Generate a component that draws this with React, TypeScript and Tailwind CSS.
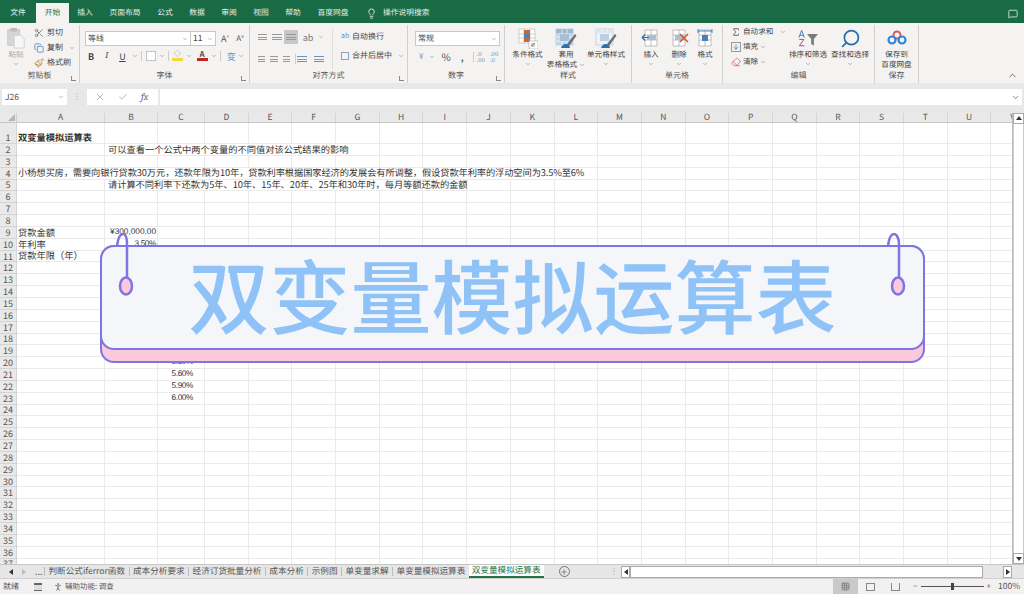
import { ChevronDown, ChevronUp, Check, X, Lightbulb, MessageSquare, Scissors, Copy, Paintbrush, Sigma, ArrowDown, Eraser, Search, Plus, Grid3x3, PersonStanding } from "lucide-react";
import type { ReactNode } from "react";

const tabs = [
  { name: "文件", width: "w-[36px]" },
  { name: "开始", width: "w-[33px]" },
  { name: "插入", width: "w-[32px]" },
  { name: "页面布局", width: "w-[48px]" },
  { name: "公式", width: "w-[32px]" },
  { name: "数据", width: "w-[32px]" },
  { name: "审阅", width: "w-[32px]" },
  { name: "视图", width: "w-[32px]" },
  { name: "帮助", width: "w-[32px]" },
  { name: "百度网盘", width: "w-[48px]" },
];
const columns = ["A", "B", "C", "D", "E", "F", "G", "H", "I", "J", "K", "L", "M", "N", "O", "P", "Q", "R", "S", "T", "U", "V"];

interface Cell {
  col: number;
  text: string;
  span?: string;
  skip?: number;
  num?: boolean;
  className?: string;
}

const percent = "justify-end pr-[11px] tracking-[-0.4px]";

const cells: Record<number, Cell[]> = {
  1: [{ col: 0, text: "双变量模拟运算表", className: "font-bold" }],
  2: [{ col: 1, text: "可以查看一个公式中两个变量的不同值对该公式结果的影响", span: "col-span-6 pl-[3px]", skip: 6 }],
  4: [{ col: 0, text: "小杨想买房，需要向银行贷款30万元，还款年限为10年，贷款利率根据国家经济的发展会有所调整，假设贷款年利率的浮动空间为3.5%至6%", span: "col-span-12 tracking-[-0.11px]", skip: 12 }],
  5: [{ col: 1, text: "请计算不同利率下还款为5年、10年、15年、20年、25年和30年时，每月等额还款的金额", span: "col-span-8 pl-[3px] tracking-[-0.05px]", skip: 8 }],
  9: [{ col: 0, text: "贷款金额" }, { col: 1, text: "¥300,000.00", num: true, className: "justify-end" }],
  10: [{ col: 0, text: "年利率" }, { col: 1, text: "3.50%", num: true, className: "justify-end tracking-[-0.4px]" }],
  11: [{ col: 0, text: "贷款年限（年）" }],
  20: [{ col: 2, text: "5.30%", num: true, className: percent }],
  21: [{ col: 2, text: "5.60%", num: true, className: percent }],
  22: [{ col: 2, text: "5.90%", num: true, className: percent }],
  23: [{ col: 2, text: "6.00%", num: true, className: percent }],
};

const rowNumbers = Array.from({ length: 37 }, (_, i) => i + 1);
const gridCols = "grid grid-cols-[88px_53px_47px_repeat(19,43.7px)]";

function SheetRow({ row }: { row: number }) {
  const rowCells = cells[row] ?? [];
  const out: ReactNode[] = [];
  for (let c = 0; c < columns.length; c++) {
    const cell = rowCells.find((x) => x.col === c);
    out.push(
      <div
        key={c}
        className={`flex whitespace-nowrap border-r border-b border-[#eaeaea] px-[1px] leading-none text-[#333] ${cell?.num ? "font-['Liberation_Sans',sans-serif] text-[8.25px]" : "text-[9.25px]"} ${row === 1 ? "items-end pb-[1px]" : "items-center"} ${cell?.span ?? ""} ${cell?.className ?? ""}`}
      >
        {cell?.text}
      </div>,
    );
    if (cell?.skip) c += cell.skip - 1;
  }
  return (
    <div className={`flex ${row === 1 ? "h-[21px]" : "h-[11.85px]"}`}>
      <div className={`flex w-[17px] shrink-0 justify-center border-r border-b border-[#d4d4d4] bg-[#e9e9e9] text-[9px] leading-none text-[#555] ${row === 1 ? "items-end pb-[1px]" : "items-center"}`}>
        {row}
      </div>
      <div className={`${gridCols} min-w-0`}>{out}</div>
    </div>
  );
}

function Group({ label, width, children, launcher }: { label: string; width: string; children: ReactNode; launcher?: boolean }) {
  return (
    <div className={`relative flex h-full shrink-0 flex-col border-r border-[#d2d0ce] ${width}`}>
      <div className="flex min-h-0 flex-1">{children}</div>
      <div className="h-[13px] text-center text-[8px] leading-[11px] text-[#555]">{label}</div>
      {launcher && <span className="absolute right-[3px] bottom-[2px] h-[5px] w-[5px] border-b border-l border-[#888]" />}
    </div>
  );
}

function BigButton({ label, icon, width, chevron = true }: { label: ReactNode; icon: ReactNode; width: string; chevron?: boolean }) {
  return (
    <div className={`flex shrink-0 flex-col items-center pt-[3px] text-center text-[7.6px] leading-[10px] text-[#444] ${width}`}>
      <div className="flex h-[20px] items-center justify-center">{icon}</div>
      <div className="mt-[2px] whitespace-nowrap">{label}</div>
      {chevron && <ChevronDown size={6} className="mt-[1px] text-[#777]" />}
    </div>
  );
}

function SmallChevron() {
  return <ChevronDown size={6} className="text-[#777]" />;
}

function TriangleLeft({ muted = false }: { muted?: boolean }) {
  return <span className={`h-0 w-0 border-y-[3px] border-r-[4px] border-y-transparent ${muted ? "border-r-[#bbb]" : "border-r-[#333]"}`} />;
}

function TriangleRight({ muted = false }: { muted?: boolean }) {
  return <span className={`h-0 w-0 border-y-[3px] border-l-[4px] border-y-transparent ${muted ? "border-l-[#bbb]" : "border-l-[#333]"}`} />;
}

function PasteIcon() {
  return (
    <svg width="20" height="22" viewBox="0 0 20 24">
      <rect x="1" y="3" width="13" height="17" fill="#d6d6d6" stroke="#c6c6c6" />
      <rect x="4" y="1" width="7" height="4" fill="#bdbdbd" />
      <path d="M8 9h7l4 4v10H8z" fill="#f7f7f7" stroke="#cfcfcf" />
    </svg>
  );
}

function CondFormatIcon() {
  return (
    <svg width="20" height="21" viewBox="0 0 20 21">
      <path d="M1 1h16v14H1zM6 1v14M12 1v14M1 6h16M1 10h16" fill="#fff" stroke="#bbb" strokeWidth="0.7" />
      <rect x="6" y="2" width="6" height="4" fill="#c5683f" />
      <rect x="6" y="6" width="6" height="4" fill="#4f7fb5" />
      <rect x="6" y="10" width="6" height="4" fill="#c5683f" />
      <rect x="11" y="13" width="9" height="8" fill="#fff" stroke="#aaa" strokeWidth="0.6" />
      <path d="M13 18l4-3M13 16h4M13 18h4" stroke="#555" strokeWidth="0.6" />
    </svg>
  );
}

function TableFormatIcon({ light = false }: { light?: boolean }) {
  return (
    <svg width="22" height="21" viewBox="0 0 22 21">
      <rect x="1" y="1" width="17" height="16" fill={light ? "#eef2f7" : "#c9d6e6"} stroke="#b9c4d0" strokeWidth="0.7" />
      <rect x="1" y="1" width="17" height="4" fill={light ? "#dde6f0" : "#9db7d3"} />
      <path d="M1 9h17M1 13h17M7 1v16M12 1v16" stroke="#f4f6f9" strokeWidth="0.7" />
      <rect x="5" y="6" width="9" height="7" fill={light ? "#bccfe3" : "#a9bfd8"} />
      <path d="M12 16l8-10 1.500 1.500-7 10z" fill="#6d6d6d" />
      <path d="M6 20c1-4 5-5 8-3l1 3z" fill="#2a6fae" />
    </svg>
  );
}

function CellsIcon({ kind }: { kind: "insert" | "delete" | "format" }) {
  return (
    <svg width="20" height="21" viewBox="0 0 20 21">
      <path d="M4 2h12v16H4zM4 7h12M4 12h12M10 2v16" fill="#fff" stroke="#a8a8a8" strokeWidth="0.7" />
      {kind === "format" ? (
        <>
          <rect x="7" y="7" width="6" height="6" fill="#4a7fb8" />
          <path d="M3 3h14M3 1v4M17 1v4" stroke="#2a6fae" strokeWidth="0.8" />
        </>
      ) : (
        <rect x="6" y="7" width="9" height="5" fill="#a9bfd8" />
      )}
      {kind === "insert" && <path d="M1 9.500h7M1 9.500l3-3M1 9.500l3 3" stroke="#2a6fae" fill="none" strokeWidth="1.200" />}
      {kind === "delete" && <path d="M11 6l8 8M19 6l-8 8" stroke="#d0582f" strokeWidth="1.600" />}
    </svg>
  );
}

function SortIcon() {
  return (
    <svg width="20" height="19" viewBox="0 0 22 20">
      <path d="M10 5h12l-4.500 5.500V18l-3-2v-5.500z" fill="#7b7b7b" />
      <path d="M1 9l3-8 3 8M2 6.500h4" fill="none" stroke="#4a7fb8" strokeWidth="1.100" />
      <path d="M1.500 11h5l-5 7h5.500" fill="none" stroke="#b0478f" strokeWidth="1.100" />
    </svg>
  );
}

function BaiduIcon() {
  return (
    <svg width="20" height="16" viewBox="0 0 20 16" fill="none">
      <circle cx="10" cy="5" r="3.500" stroke="#de5a4a" strokeWidth="2" />
      <circle cx="5" cy="10" r="3.500" stroke="#2f86d8" strokeWidth="2.200" />
      <circle cx="15" cy="10" r="3.500" stroke="#2f86d8" strokeWidth="2.200" />
    </svg>
  );
}

function AlignGlyph({ blue = false }: { blue?: boolean }) {
  return (
    <span className="flex w-[10px] flex-col gap-[1.500px]">
      <span className={`h-px w-full ${blue ? "bg-[#6b93bd]" : "bg-[#999]"}`} />
      <span className="h-px w-full bg-[#999]" />
      <span className={`h-px w-full ${blue ? "bg-[#6b93bd]" : "bg-[#999]"}`} />
    </span>
  );
}

function Ribbon() {
  return (
    <div className="flex h-[60px] shrink-0 bg-[#f4f3f2] pt-[2px]">
      <Group label="剪贴板" width="w-[80px]" launcher>
        <BigButton width="w-[32px]" label={<span className="text-[#aaa]">粘贴</span>} icon={<PasteIcon />} />
        <div className="flex flex-col gap-[4px] pt-[2px] pl-[2px] text-[8px] leading-[11px] text-[#444]">
          <div className="flex items-center gap-[3px]"><Scissors size={10} className="text-[#777]" />剪切</div>
          <div className="flex items-center gap-[3px]"><Copy size={10} className="text-[#5b86b5]" />复制<ChevronDown size={6} className="ml-[3px] text-[#777]" /></div>
          <div className="flex items-center gap-[3px]"><Paintbrush size={10} className="text-[#b58a3a]" />格式刷</div>
        </div>
      </Group>

      <Group label="字体" width="w-[170px]" launcher>
        <div className="flex flex-col gap-[5px] pt-[6px] pl-[5px]">
          <div className="flex items-center">
            <div className="flex h-[15px] w-[106px] items-center justify-between border border-[#c8c8c8] bg-white px-[2px] text-[8px] text-[#444]">等线<SmallChevron /></div>
            <div className="ml-[-1px] flex h-[15px] w-[26px] items-center justify-between border border-[#c8c8c8] bg-white px-[2px] text-[8.500px] text-[#444]">11<SmallChevron /></div>
            <span className="ml-[5px] text-[9px] text-[#555]">A<sup className="text-[5px]">^</sup></span>
            <span className="ml-[7px] text-[8px] text-[#555]">A<sup className="text-[5px]">v</sup></span>
          </div>
          <div className="flex items-center text-[9px] leading-none text-[#444]">
            <span className="ml-[3px] font-bold">B</span>
            <span className="ml-[11px] font-serif italic">I</span>
            <span className="ml-[11px] underline">U</span>
            <span className="ml-[6px]"><SmallChevron /></span>
            <span className="ml-[3px] h-[10px] w-px bg-[#ccc]" />
            <span className="ml-[4px] h-[10px] w-[10px] border border-dashed border-[#bbb] bg-white" />
            <span className="ml-[3px]"><SmallChevron /></span>
            <span className="ml-[3px] h-[10px] w-px bg-[#ccc]" />
            <span className="ml-[3px] flex flex-col items-center"><span className="text-[7px] leading-[7px] text-[#777]">◇</span><span className="h-[3px] w-[11px] bg-[#f2d93c]" /></span>
            <span className="ml-[3px]"><SmallChevron /></span>
            <span className="ml-[5px] flex flex-col items-center"><span className="text-[8px] leading-[7px] font-bold text-[#555]">A</span><span className="h-[3px] w-[11px] bg-[#c4261d]" /></span>
            <span className="ml-[3px]"><SmallChevron /></span>
            <span className="ml-[3px] h-[10px] w-px bg-[#ccc]" />
            <span className="ml-[6px] text-[9px] text-[#6b93bd]">变</span>
            <span className="ml-[2px]"><SmallChevron /></span>
          </div>
        </div>
      </Group>

      <Group label="对齐方式" width="w-[158px]" launcher>
        <div className="flex w-[74px] shrink-0 flex-col gap-[10px] pt-[5px] pl-[8px]">
          <div className="flex h-[14px] items-center gap-[5px]">
            <AlignGlyph /><AlignGlyph /><span className="ml-[-3px] flex h-[14px] w-[15px] items-center justify-center bg-[#c8c8c8]"><AlignGlyph /></span>
            <span className="text-[9px] leading-none text-[#777]">ab</span><SmallChevron />
          </div>
          <div className="flex items-center gap-[5px]">
            <AlignGlyph /><AlignGlyph /><AlignGlyph />
            <span className="h-[10px] w-px bg-[#ccc]" />
            <span className="ml-[-4px]"><AlignGlyph blue /></span><span className="ml-[2px]"><AlignGlyph blue /></span>
          </div>
        </div>
        <span className="mx-[8px] mt-[4px] mb-[1px] w-px shrink-0 bg-[#ddd]" />
        <div className="flex flex-col gap-[6px] pt-[5px] text-[8px] leading-[13px] whitespace-nowrap text-[#444]">
          <div className="flex items-center gap-[3px]"><span className="w-[8px] text-[7px] text-[#6b93bd]">ab</span>自动换行</div>
          <div className="flex items-center gap-[3px]"><span className="h-[8px] w-[8px] border border-[#8aa4c0]" />合并后居中<ChevronDown size={6} className="ml-[3px] text-[#777]" /></div>
        </div>
      </Group>

      <Group label="数字" width="w-[97px]" launcher>
        <div className="flex flex-col gap-[5px] pt-[6px] pl-[7px]">
          <div className="flex h-[15px] w-[85px] items-center justify-between border border-[#c8c8c8] bg-white px-[2px] text-[8px] text-[#444]">常规<SmallChevron /></div>
          <div className="flex items-center text-[9px] leading-none text-[#555]">
            <span className="ml-[4px] text-[8px] text-[#6b93bd]">¥</span>
            <span className="ml-[6px]"><SmallChevron /></span>
            <span className="ml-[6px] text-[10px]">%</span>
            <span className="ml-[10px] font-bold">,</span>
            <span className="ml-[9px] h-[10px] w-px bg-[#ccc]" />
            <span className="ml-[3px] text-[6px] leading-[6px] text-[#6b93bd]">.0<br />.00</span>
            <span className="ml-[5px] text-[6px] leading-[6px] text-[#6b93bd]">.00<br />.0</span>
          </div>
        </div>
      </Group>

      <Group label="样式" width="w-[127px]">
        <BigButton width="w-[45px]" label="条件格式" icon={<CondFormatIcon />} />
        <BigButton width="w-[32px]" label={<>套用<br /><span className="inline-flex items-center gap-[2px]">表格格式<SmallChevron /></span></>} icon={<TableFormatIcon />} chevron={false} />
        <BigButton width="w-[48px]" label="单元格样式" icon={<TableFormatIcon light />} />
      </Group>

      <Group label="单元格" width="w-[91px]">
        <BigButton width="w-[38px]" label="插入" icon={<CellsIcon kind="insert" />} />
        <BigButton width="w-[18px]" label="删除" icon={<CellsIcon kind="delete" />} />
        <BigButton width="w-[34px]" label="格式" icon={<CellsIcon kind="format" />} />
      </Group>

      <Group label="编辑" width="w-[152px]">
        <div className="flex w-[64px] shrink-0 flex-col gap-[3px] pt-[1px] pl-[8px] text-[7.6px] leading-[12px] text-[#444]">
          <div className="flex items-center gap-[2px] whitespace-nowrap"><Sigma size={10} className="text-[#555]" />自动求和<ChevronDown size={6} className="ml-[5px] text-[#777]" /></div>
          <div className="flex items-center gap-[2px]"><ArrowDown size={10} className="border border-[#999] text-[#2a6fae]" />填充<SmallChevron /></div>
          <div className="flex items-center gap-[2px]"><Eraser size={10} className="text-[#d9667f]" />清除<SmallChevron /></div>
        </div>
        <BigButton width="w-[42px]" label="排序和筛选" icon={<SortIcon />} />
        <BigButton width="w-[42px]" label="查找和选择" icon={<Search size={21} className="-scale-x-100 text-[#2a6fae]" />} />
      </Group>

      <Group label="保存" width="w-[44px]">
        <BigButton width="w-full" label={<>保存到<br />百度网盘</>} icon={<BaiduIcon />} chevron={false} />
      </Group>

      <div className="flex flex-1 items-end justify-end pr-[6px] pb-[2px]">
        <ChevronUp size={11} className="text-[#666]" />
      </div>
    </div>
  );
}

function FormulaBar() {
  return (
    <div className="flex h-[30px] shrink-0 bg-[#e8e8e8] pt-[6px] pb-[8px]">
      <div className="ml-[2px] flex w-[65px] items-center justify-between bg-white px-[3px] text-[8.500px] text-[#555]">J26<SmallChevron /></div>
      <div className="flex w-[20px] items-center justify-center text-[8px] text-[#aaa]">⋮</div>
      <div className="flex w-[71px] items-center gap-[13px] bg-white pl-[8px] text-[#aaa]">
        <X size={10} /><Check size={10} /><span className="font-serif text-[10px] text-[#666] italic">fx</span>
      </div>
      <div className="mr-[2px] ml-[2px] flex flex-1 items-center justify-end bg-white pr-[2px]"><ChevronDown size={9} className="text-[#666]" /></div>
    </div>
  );
}

function Sheet() {
  return (
    <div className="flex min-h-0 flex-1 overflow-hidden bg-white">
      <div className="relative min-w-0 flex-1 overflow-hidden">
        <div className="flex h-[10px] border-b border-[#c6c6c6] bg-[#e9e9e9]">
          <div className="flex w-[17px] shrink-0 items-end justify-end border-r border-[#cfcfcf] p-[1px]">
            <span className="h-0 w-0 border-b-[7px] border-l-[7px] border-b-[#b5b5b5] border-l-transparent" />
          </div>
          <div className={gridCols}>
            {columns.map((c) => (
              <div key={c} className="flex items-center justify-center border-r border-[#d4d4d4] text-[8.500px] leading-none text-[#555]">{c}</div>
            ))}
          </div>
        </div>
        {rowNumbers.map((r) => <SheetRow key={r} row={r} />)}
      </div>
      <div className="flex w-[12px] shrink-0 flex-col border-l border-[#bbb] bg-[#eee]">
        <div className="flex h-[11px] items-center justify-center border border-[#aaa] bg-white">
          <span className="h-0 w-0 border-x-[3px] border-b-[4px] border-x-transparent border-b-[#333]" />
        </div>
        <div className="h-[440px] border-x border-[#ccc] bg-white" />
        <div className="mt-auto flex h-[11px] items-center justify-center border border-[#aaa] bg-white">
          <span className="h-0 w-0 border-x-[3px] border-t-[4px] border-x-transparent border-t-[#333]" />
        </div>
      </div>
    </div>
  );
}

function SheetTabs() {
  const names = ["判断公式iferror函数", "成本分析要求", "经济订货批量分析", "成本分析", "示例图", "单变量求解", "单变量模拟运算表"];
  return (
    <div className="flex h-[14px] shrink-0 items-center border-t border-[#c6c6c6] bg-[#e6e6e6] text-[8.600px] leading-none text-[#555]">
      <div className="flex w-[621px] shrink-0 items-center">
        <span className="ml-[9px] flex"><TriangleLeft /></span>
        <span className="ml-[9px] flex"><TriangleRight muted /></span>
        <span className="ml-[9px] w-[9px] text-[9px]">...</span>
        <div className="flex items-center">
          {names.map((n) => (
            <span key={n} className="border-l border-[#bbb] px-[3.500px] whitespace-nowrap">{n}</span>
          ))}
        </div>
        <span className="flex h-[13px] items-center border-b-2 border-[#217346] bg-white px-[3px] whitespace-nowrap text-[#217346]">双变量模拟运算表</span>
        <span className="ml-[15px] flex h-[11px] w-[11px] items-center justify-center rounded-full border border-[#777]"><Plus size={8} className="text-[#666]" /></span>
        <span className="ml-auto pr-[3px] text-[8px] text-[#999]">⋮</span>
      </div>
      <span className="flex h-[12px] w-[9px] items-center justify-center border border-[#aaa] bg-white"><TriangleLeft /></span>
      <div className="h-[12px] w-[353px] border border-[#aaa] bg-white" />
      <span className="ml-[20px] flex h-[12px] w-[9px] items-center justify-center border border-[#aaa] bg-white"><TriangleRight /></span>
    </div>
  );
}

function StatusBar() {
  return (
    <div className="flex h-[16px] shrink-0 items-center border-t border-[#d0d0d0] bg-[#f2f0f0] text-[8px] leading-none text-[#555]">
      <span className="ml-[3px]">就绪</span>
      <span className="ml-[15px] h-[8px] w-[8px] border-t-2 border-b border-[#666] bg-[#ddd]" />
      <PersonStanding size={10} className="ml-[11px] text-[#666]" />
      <span className="ml-[2px] text-[7.500px]">辅助功能: 调查</span>
      <div className="ml-auto flex h-full items-center">
        <span className="flex h-full w-[25px] items-center justify-center bg-[#c9c9c9]"><Grid3x3 size={9} className="text-[#777]" /></span>
        <span className="flex h-full w-[25px] items-center justify-center"><span className="h-[8px] w-[9px] border border-[#888]" /></span>
        <span className="flex h-full w-[25px] items-center justify-center"><span className="h-[8px] w-[9px] border border-t-0 border-[#888]" /></span>
        <span className="ml-[5px] text-[#666]">−</span>
        <div className="relative mx-[3px] h-px w-[63px] bg-[#555]">
          <span className="absolute top-[-3px] left-[30px] h-[7px] w-[3px] bg-[#444]" />
        </div>
        <span className="text-[#666]">+</span>
        <span className="mr-[4px] ml-[7px] text-[8.500px]">100%</span>
      </div>
    </div>
  );
}

function Banner() {
  return (
    <div className="absolute top-[233px] left-[100px] h-[130px] w-[825px]">
      <div className="absolute inset-x-0 top-[12px] bottom-0 rounded-[14px] border-[2.500px] border-[#7d76e2] bg-[#fcc8dc]" />
      <div className="absolute inset-x-0 top-[12px] bottom-[13px] flex items-center justify-center rounded-[14px] border-[2.500px] border-[#7d76e2] bg-[#f5f6fa] pb-[8px] text-[81px] leading-none font-medium text-[#8fc3f7]">
        双变量模拟运算表
      </div>
      <svg className="absolute inset-0" width="825" height="130" viewBox="0 0 825 130" fill="none">
        <path d="M17 13C18 5 20 1 23 1c3 0 4 5 4 10V44" stroke="#7d76e2" strokeWidth="2.500" />
        <ellipse cx="26" cy="53" rx="6" ry="8.500" fill="#fcc8dc" stroke="#7d76e2" strokeWidth="2.500" />
        <path d="M788 13c1-8 3-12 6-12 3 0 5 5 5 10V44" stroke="#7d76e2" strokeWidth="2.500" />
        <ellipse cx="798" cy="53" rx="6" ry="8.500" fill="#fcc8dc" stroke="#7d76e2" strokeWidth="2.500" />
      </svg>
    </div>
  );
}

export default function App() {
  return (
    <div className="relative flex h-[594px] w-[1024px] flex-col overflow-hidden bg-white font-['Noto_Sans_CJK_SC',sans-serif] [text-rendering:geometricPrecision]">
      <div className="relative flex h-[23px] shrink-0 items-end overflow-hidden bg-[#196b46] text-[7.750px] leading-none text-[#e4efe9]">
        {tabs.map((t) => (
          <div
            key={t.name}
            className={`flex h-[20px] items-center justify-center pb-[1px] ${t.width} ${t.name === "开始" ? "bg-[#f4f3f2] text-[#217346]" : ""}`}
          >
            {t.name}
          </div>
        ))}
        <Lightbulb size={11} className="mb-[4px] ml-[9px]" />
        <span className="mb-[6px] ml-[6px]">操作说明搜索</span>
        <MessageSquare size={10} className="absolute top-[9px] right-[6px]" />
      </div>
      <Ribbon />
      <FormulaBar />
      <Sheet />
      <SheetTabs />
      <StatusBar />
      <Banner />
    </div>
  );
}
